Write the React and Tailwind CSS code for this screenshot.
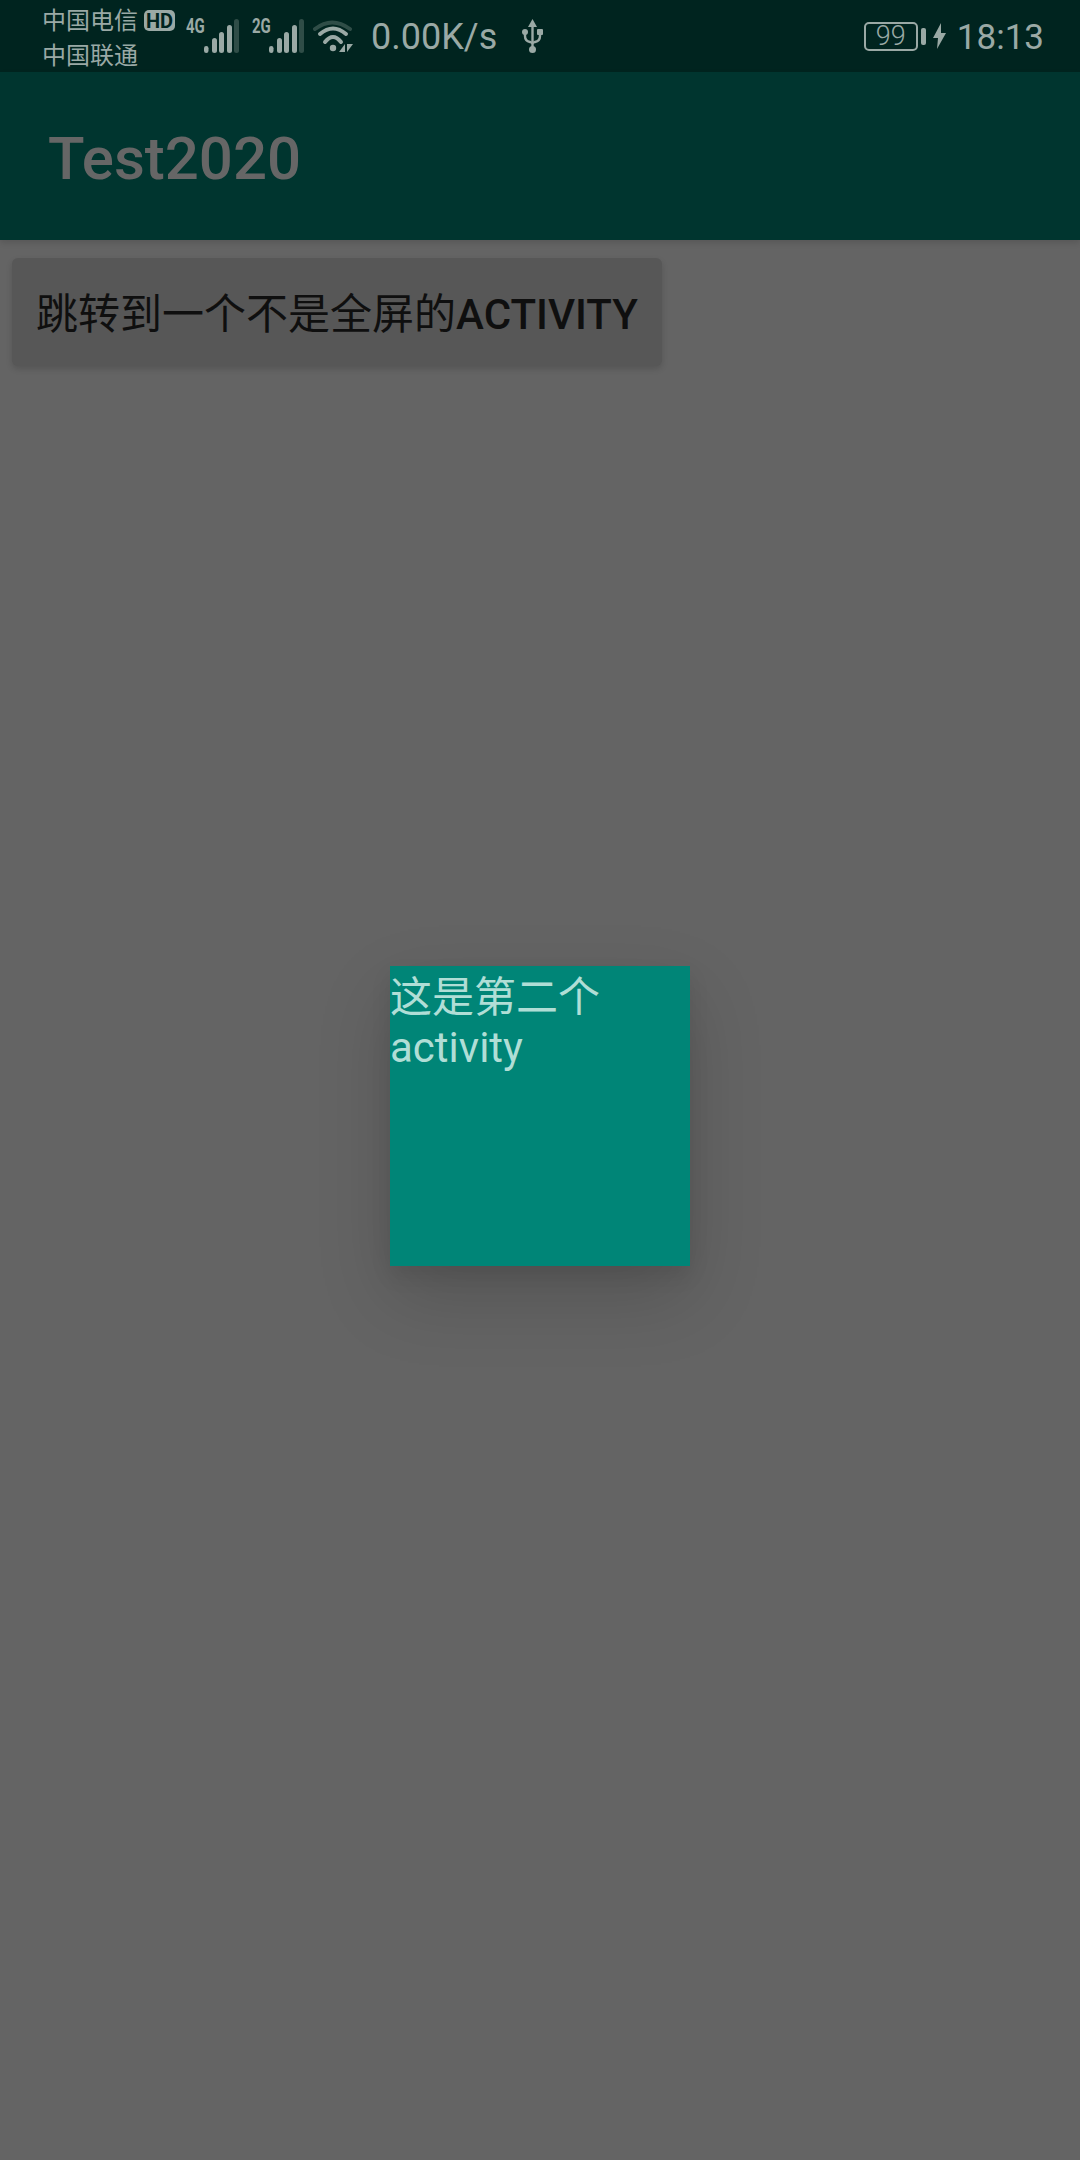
import React from 'react';

const SignalBars = () => (
  <svg width="35" height="34" viewBox="0 0 35 34" className="mt-[19px] self-start shrink-0">
    <rect x="0" y="27" width="4.5" height="7" rx="2.2" fill="#9aa9a5" />
    <rect x="8" y="19" width="5" height="15" rx="2.5" fill="#9aa9a5" />
    <rect x="15" y="13" width="5" height="21" rx="2.5" fill="#9aa9a5" />
    <rect x="23" y="6" width="5" height="28" rx="2.5" fill="#9aa9a5" />
    <rect x="30" y="0" width="5" height="34" rx="2.5" fill="#2f4d47" />
  </svg>
);

const Wifi = () => (
  <svg width="40" height="32" viewBox="0 0 40 32" className="ml-[9px] mt-[20px] self-start shrink-0" fill="none">
    <path d="M2 9 Q19 -4 37 9" stroke="#2f4d47" strokeWidth="4" strokeLinecap="round" />
    <path d="M7 14 Q20 3 33 14" stroke="#9aa9a5" strokeWidth="4" strokeLinecap="round" />
    <path d="M12 22 Q20 12 28 22" stroke="#9aa9a5" strokeWidth="4" strokeLinecap="round" />
    <circle cx="20" cy="28" r="3.2" fill="#9aa9a5" />
    <path d="M26 32 L32 24 V32 Z M34 24 H40 L34 32 Z" fill="#9aa9a5" />
  </svg>
);

const Usb = () => (
  <svg width="21" height="34" viewBox="0 0 21 34" className="ml-[24px] mt-[19px] self-start shrink-0" fill="none">
    <path d="M10.5 0 L15 8 H6 Z" fill="#9aa9a5" />
    <path d="M10.5 6 V28" stroke="#9aa9a5" strokeWidth="2.4" />
    <path d="M3 15 V17 Q3 22 8 23 L10.5 24 L13 23 Q18 22 18 17 V15" stroke="#9aa9a5" strokeWidth="2.4" />
    <circle cx="10.5" cy="30.5" r="3.5" fill="#9aa9a5" />
    <circle cx="3" cy="13" r="3" fill="#9aa9a5" />
    <rect x="15" y="10" width="6" height="6" rx="1" fill="#9aa9a5" />
  </svg>
);

const App = () => {
  return (
    <div className="relative w-[1080px] h-[2160px] overflow-hidden bg-[#646464] font-['Roboto','Noto_Sans_CJK_SC',sans-serif]">
      {/* status bar */}
      <div className="h-[72px] flex items-center bg-[#00241f] pl-[42px] pr-[36px] text-[#9aa9a5]">
        <div className="w-[94px] shrink-0 flex flex-col text-[24px] leading-[35px] font-['Noto_Sans_CJK_SC',sans-serif] whitespace-nowrap">
          <span>中国电信</span>
          <span>中国联通</span>
        </div>
        <div className="ml-[8px] mt-[10px] self-start w-[31px] h-[21px] shrink-0 rounded-[5px] bg-[#9aa9a5] flex items-center justify-center text-[#00241f] text-[20px] leading-none font-bold">HD</div>
        <span className="ml-[11px] mt-[17px] self-start w-[18px] text-[20px] leading-[18px] font-bold scale-x-75 origin-left whitespace-nowrap">4G</span>
        <SignalBars />
        <span className="ml-[13px] mt-[17px] self-start w-[17px] text-[20px] leading-[18px] font-bold scale-x-75 origin-left whitespace-nowrap">2G</span>
        <SignalBars />
        <Wifi />
        <span className="ml-[18px] mt-[2px] w-[127px] shrink-0 text-[36px] leading-none whitespace-nowrap">0.00K/s</span>
        <Usb />
        <div className="ml-auto w-[54px] h-[29px] shrink-0 border-2 border-[#9aa9a5] rounded-[5px] flex items-center justify-center text-[27px] leading-none font-light">99</div>
        <div className="ml-[3px] w-[5px] h-[17px] shrink-0 rounded-[2px] bg-[#9aa9a5]" />
        <svg width="13" height="26" viewBox="0 0 13 26" className="ml-[7px] shrink-0">
          <path d="M8 0 L0 15 H5 L4 26 L13 10 H8 Z" fill="#9aa9a5" />
        </svg>
        <span className="ml-[11px] mt-[2px] text-[35px] leading-none">18:13</span>
      </div>

      {/* app bar */}
      <div className="h-[168px] flex items-center pl-[48px] bg-[#00352f] shadow-[0_3px_6px_rgba(0,0,0,0.12)]">
        <h1 className="mt-[6px] text-[60px] leading-none font-medium text-[#666666]">Test2020</h1>
      </div>

      <button className="block ml-[12px] mt-[18px] pt-[5px] w-[650px] h-[108px] rounded-[6px] bg-[#575757] text-[42px] leading-none text-[#0f0f0f] text-center shadow-[0_3px_6px_rgba(0,0,0,0.15)]">
        跳转到一个不是全屏的<span className="font-medium">ACTIVITY</span>
      </button>

      {/* second activity window */}
      <div className="absolute inset-x-0 top-[72px] bottom-0 flex items-center justify-center">
        <div className="w-[300px] h-[300px] pt-[7px] bg-[#008577] text-[#b0ded6] text-[42px] leading-[50px] shadow-[0_30px_70px_rgba(0,0,0,0.16),0_10px_20px_rgba(0,0,0,0.08)]">
          这是第二个 activity
        </div>
      </div>
    </div>
  );
};

export default App;
